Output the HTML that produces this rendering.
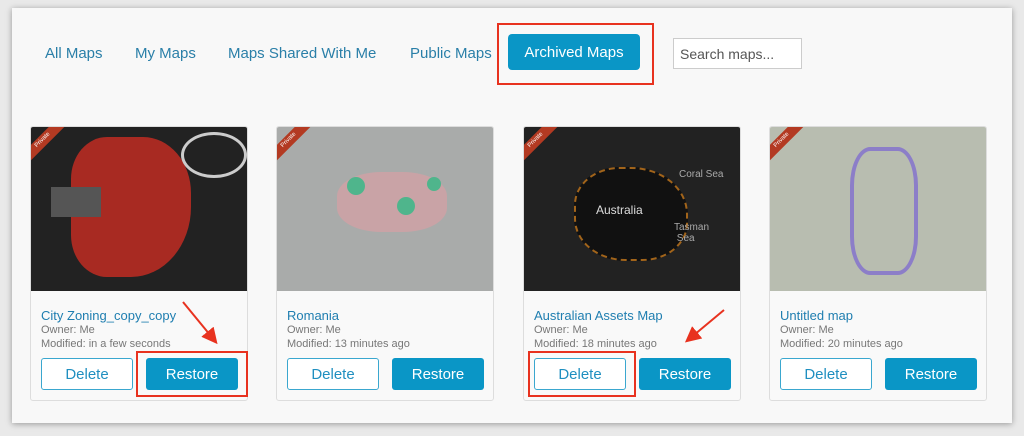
<!DOCTYPE html>
<html><head><style>
body{margin:0;width:1024px;height:436px;background:#e9e9e9;font-family:"Liberation Sans",sans-serif;position:relative;overflow:hidden}
.panel{position:absolute;left:12px;top:8px;width:1000px;height:415px;background:#f8f8f8;box-shadow:0 1px 6px rgba(0,0,0,.35)}
.nav{position:absolute;top:45px;font-size:15px;color:#2a7fa8}
.arch{position:absolute;left:508px;top:34px;width:132px;height:36px;background:#0a96c6;border-radius:4px;color:#fff;font-size:15px;line-height:38px;text-align:center}
.red{position:absolute;border:2px solid #e8321f}
.search{position:absolute;left:673px;top:38px;width:129px;height:31px;border:1px solid #ccc;background:#fff;font-size:14px;color:#555;line-height:31px;padding-left:6px;box-sizing:border-box}
.card{position:absolute;top:126px;width:218px;height:275px;background:#f9f9f9;border:1px solid #ddd;border-radius:3px;box-sizing:border-box;overflow:hidden}
.img{height:164px;position:relative;overflow:hidden}
.title{position:absolute;left:10px;top:181px;font-size:13px;color:#1f7eb0}
.meta{position:absolute;left:10px;font-size:11px;color:#777}
.del,.res{position:absolute;top:231px;width:92px;height:32px;border-radius:3px;box-sizing:border-box;font-size:15px;line-height:33px;text-align:center}
.del{left:10px;border:1px solid #3aa7cf;color:#1f8fc0;background:#fff;line-height:31px}
.res{left:115px;background:#0a96c6;color:#fff}
.rib{position:absolute;left:-18px;top:8px;width:60px;height:11px;background:#b33a22;transform:rotate(-45deg);color:#fff;font-size:6px;text-align:center;line-height:11px}
</style></head><body>
<div class="panel"></div>
<div class="nav" style="left:45px">All Maps</div>
<div class="nav" style="left:135px">My Maps</div>
<div class="nav" style="left:228px">Maps Shared With Me</div>
<div class="nav" style="left:410px">Public Maps</div>
<div class="arch">Archived Maps</div>
<div class="red" style="left:497px;top:23px;width:153px;height:58px"></div>
<div class="search">Search maps...</div>

<div class="card" style="left:30px">
<div class="img" style="background:#222"><div style="position:absolute;left:40px;top:10px;width:120px;height:140px;background:#a82a22;border-radius:30% 40% 50% 30%"></div><div style="position:absolute;left:20px;top:60px;width:50px;height:30px;background:#555"></div><div style="position:absolute;left:150px;top:5px;width:60px;height:40px;border:3px solid #ccc;border-radius:50%"></div><div class="rib">Private</div></div>
<div class="title">City Zoning_copy_copy</div>
<div class="meta" style="top:197px">Owner: Me</div><div class="meta" style="top:211px">Modified: in a few seconds</div>
<div class="del">Delete</div><div class="res">Restore</div></div>

<div class="card" style="left:276px">
<div class="img" style="background:#a9abaa"><div style="position:absolute;left:60px;top:45px;width:110px;height:60px;background:#c9a3a6;border-radius:40%"></div><div style="position:absolute;left:70px;top:50px;width:18px;height:18px;background:#4fb58c;border-radius:50%"></div><div style="position:absolute;left:120px;top:70px;width:18px;height:18px;background:#4fb58c;border-radius:50%"></div><div style="position:absolute;left:150px;top:50px;width:14px;height:14px;background:#4fb58c;border-radius:50%"></div><div class="rib">Private</div></div>
<div class="title">Romania</div>
<div class="meta" style="top:197px">Owner: Me</div><div class="meta" style="top:211px">Modified: 13 minutes ago</div>
<div class="del">Delete</div><div class="res">Restore</div></div>

<div class="card" style="left:523px">
<div class="img" style="background:#222"><div style="position:absolute;left:50px;top:40px;width:110px;height:90px;background:#111;border-radius:40% 50% 40% 45%;border:2px dashed #a2641a"></div><div style="position:absolute;left:72px;top:76px;color:#ddd;font-size:12px">Australia</div><div style="position:absolute;left:155px;top:42px;color:#aaa;font-size:10px">Coral Sea</div><div style="position:absolute;left:150px;top:95px;color:#aaa;font-size:10px">Tasman<br>&nbsp;Sea</div><div class="rib">Private</div></div>
<div class="title">Australian Assets Map</div>
<div class="meta" style="top:197px">Owner: Me</div><div class="meta" style="top:211px">Modified: 18 minutes ago</div>
<div class="del">Delete</div><div class="res">Restore</div></div>

<div class="card" style="left:769px">
<div class="img" style="background:#b8bdb0"><div style="position:absolute;left:80px;top:20px;width:60px;height:120px;border:4px solid #8c7ec8;border-radius:30%"></div><div class="rib">Private</div></div>
<div class="title">Untitled map</div>
<div class="meta" style="top:197px">Owner: Me</div><div class="meta" style="top:211px">Modified: 20 minutes ago</div>
<div class="del">Delete</div><div class="res">Restore</div></div>

<div class="red" style="left:136px;top:351px;width:108px;height:42px"></div>
<div class="red" style="left:528px;top:351px;width:104px;height:42px"></div>
<svg style="position:absolute;left:0;top:0" width="1024" height="436">
<defs><marker id="a" markerWidth="8" markerHeight="8" refX="6" refY="4" orient="auto"><path d="M0,0L8,4L0,8z" fill="#e8321f"/></marker></defs>
<line x1="183" y1="302" x2="215" y2="341" stroke="#e8321f" stroke-width="2" marker-end="url(#a)"/>
<line x1="724" y1="310" x2="688" y2="340" stroke="#e8321f" stroke-width="2" marker-end="url(#a)"/>
</svg>
</body></html>
